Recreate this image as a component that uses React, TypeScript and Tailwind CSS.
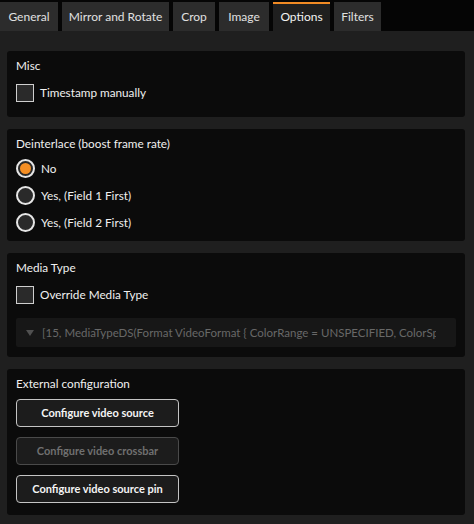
import React from "react";

const font = { fontFamily: 'Lato, "Open Sans", sans-serif' };

function Tab({ label, w, active }: { label: string; w: number; active?: boolean }) {
  return (
    <div
      className={
        "relative flex h-[29px] items-center justify-center text-[12px] " +
        (active ? "bg-[#1f1f1f] text-[#f2f2f2]" : "bg-[#2c2c2c] text-[#e0e0e0]")
      }
      style={{ width: w }}
    >
      {active && <div className="absolute left-0 right-0 top-0 h-[2px] bg-[#f08a24]" />}
      {label}
    </div>
  );
}

function Checkbox({ label }: { label: string }) {
  return (
    <div className="flex h-[20px] items-center gap-[6px]">
      <div className="h-[18px] w-[18px] border-[1.5px] border-[#cfcfcf] bg-[#2a2a2a]" />
      <span className="text-[11.75px] text-[#f0f0f0]">{label}</span>
    </div>
  );
}

function Radio({ label, checked }: { label: string; checked?: boolean }) {
  return (
    <div className="flex h-[27px] items-center gap-[6px]">
      <div className="flex h-[19px] w-[19px] items-center justify-center rounded-full border-2 border-[#e6e6e6] bg-[#2a2a2a]">
        {checked && <div className="h-[11px] w-[11px] rounded-full bg-[#f58f24]" />}
      </div>
      <span className="text-[11.75px] text-[#f0f0f0]">{label}</span>
    </div>
  );
}

function Panel({ children, pb }: { children: React.ReactNode; pb: string }) {
  return (
    <div className={"mr-[9px] ml-[7px] flex flex-col rounded-[3px] bg-[#0b0b0b] px-[9px] pt-[6px] " + pb}>
      {children}
    </div>
  );
}

function Label({ text }: { text: string }) {
  return <div className="h-[18px] text-[11.75px] leading-[18px] text-[#f0f0f0]">{text}</div>;
}

function Button({ label, disabled }: { label: string; disabled?: boolean }) {
  return (
    <div
      className={
        "flex h-[28px] w-[163px] items-center justify-center rounded-[4px] border bg-[#1c1c1c] text-[11px] font-bold " +
        (disabled ? "border-[#4a4a4a] text-[#707070]" : "border-[#c4c4c4] text-[#f4f4f4]")
      }
    >
      {label}
    </div>
  );
}

export default function App() {
  return (
    <div className="h-[524px] w-[474px] overflow-hidden bg-[#050505]" style={font}>
      <div className="flex h-[31px] items-end gap-[4px]">
        <Tab label="General" w={58} />
        <Tab label="Mirror and Rotate" w={107} />
        <Tab label="Crop" w={42} />
        <Tab label="Image" w={50} />
        <Tab label="Options" w={57} active />
        <Tab label="Filters" w={47} />
      </div>
      <div className="flex h-[493px] flex-col gap-[12px] bg-[#1f1f1f] pt-[20px]">
        <Panel pb="pb-[14px]">
          <Label text="Misc" />
          <div className="mt-[8px]">
            <Checkbox label="Timestamp manually" />
          </div>
        </Panel>
        <Panel pb="pb-[5px]">
          <Label text="Deinterlace (boost frame rate)" />
          <div className="mt-[2px] flex flex-col">
            <Radio label="No" checked />
            <Radio label="Yes, (Field 1 First)" />
            <Radio label="Yes, (Field 2 First)" />
          </div>
        </Panel>
        <Panel pb="pb-[10px]">
          <Label text="Media Type" />
          <div className="mt-[8px]">
            <Checkbox label="Override Media Type" />
          </div>
          <div className="mt-[13px] flex h-[29px] items-center overflow-hidden whitespace-nowrap rounded-[2px] bg-[#171717] pl-[10px] pr-[20px] text-[11.5px] text-[#686868]">
            <svg width="8" height="6" viewBox="0 0 8 6" className="mr-[8px] shrink-0">
              <path d="M0 0 L8 0 L4 6 Z" fill="#505050" />
            </svg>
            <span className="overflow-hidden">[15, MediaTypeDS(Format VideoFormat {"{"} ColorRange = UNSPECIFIED, ColorSp</span>
          </div>
        </Panel>
        <Panel pb="pb-[12px]">
          <Label text="External configuration" />
          <div className="mt-[6px] flex flex-col gap-[10px]">
            <Button label="Configure video source" />
            <Button label="Configure video crossbar" disabled />
            <Button label="Configure video source pin" />
          </div>
        </Panel>
      </div>
    </div>
  );
}
